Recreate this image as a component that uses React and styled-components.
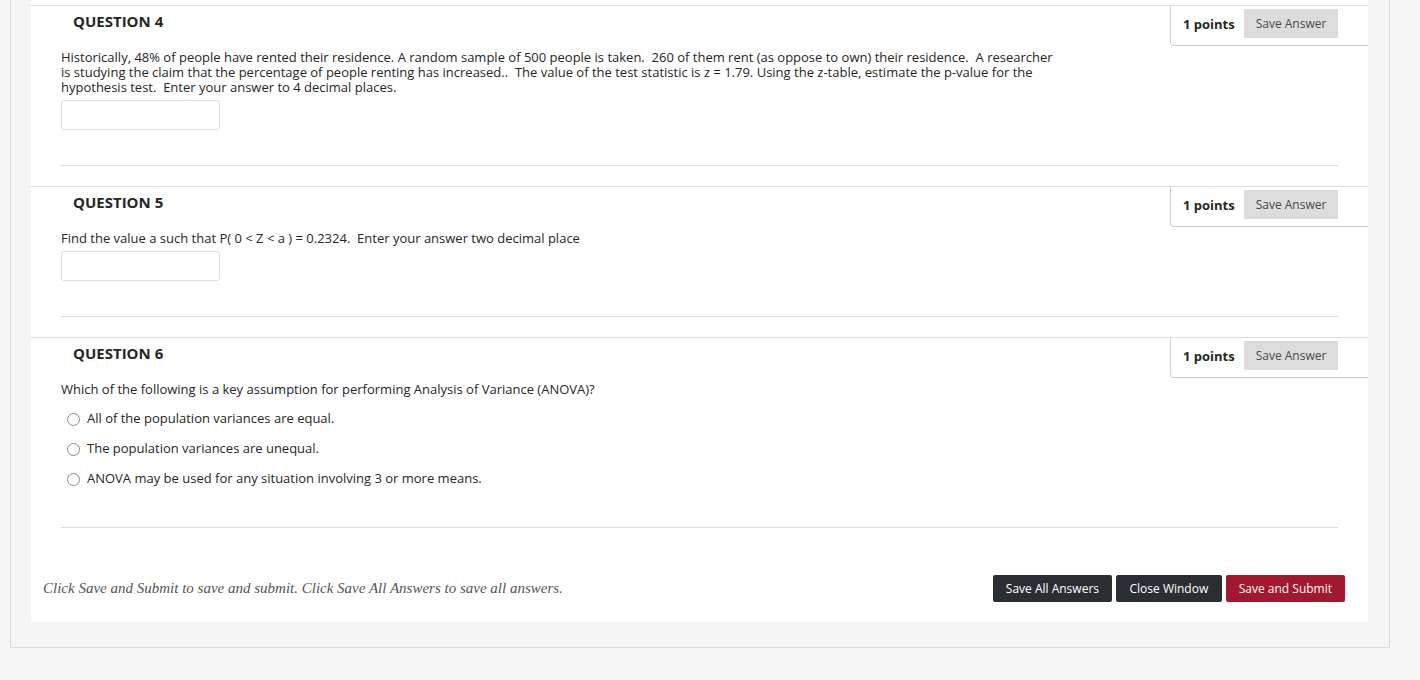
import React from "react";
import styled, { createGlobalStyle } from "styled-components";

const GlobalStyle = createGlobalStyle`
  html, body {
    margin: 0;
    padding: 0;
    background: #f6f6f6;
  }
  body {
    font-family: "Open Sans", "Liberation Sans", sans-serif;
    color: #262626;
  }
`;

const Page = styled.div`
  padding: 0 0 32px 10px;
`;

const Panel = styled.div`
  box-sizing: border-box;
  width: 1380px;
  border: 1px solid #d9d9d9;
  border-top: none;
  background: #f5f5f5;
  padding: 0 21px 25px 20px;
`;

const Content = styled.div`
  background: #fff;
  padding: 5px 0 20px;
`;

const Block = styled.div`
  border-top: 1px solid #dcdcdc;
`;

const Header = styled.div`
  display: flex;
  justify-content: space-between;
  align-items: flex-start;
`;

const Title = styled.h3`
  margin: 7px 0 0 42px;
  font-size: 15px;
  font-weight: 700;
  line-height: 16px;
  color: #262626;
`;

const PointsBox = styled.div`
  box-sizing: border-box;
  width: 198px;
  height: 40px;
  display: flex;
  align-items: center;
  justify-content: space-between;
  padding: 3px 30px 7px 12px;
  border-left: 1px solid #cfcfcf;
  border-bottom: 1px solid #cfcfcf;
  border-bottom-left-radius: 4px;
`;

const Points = styled.span`
  font-size: 13px;
  font-weight: 700;
  color: #262626;
`;

const SaveButton = styled.button`
  width: 94px;
  height: 29px;
  border: none;
  border-radius: 1px;
  background: #dcdcdc;
  color: #4a4a4a;
  font-family: "Open Sans", "Liberation Sans", sans-serif;
  font-size: 12px;
  padding: 0;
`;

const Body = styled.div`
  padding: 4px 30px 0;
`;

const QText = styled.p`
  margin: 0;
  max-width: 1000px;
  font-size: 13px;
  line-height: 15px;
  color: #262626;
`;

const AnswerInput = styled.input`
  display: block;
  box-sizing: border-box;
  width: 159px;
  height: 30px;
  margin-top: 5px;
  border: 1px solid #dddddd;
  border-radius: 3px;
  background: #fff;
`;

const Options = styled.div`
  margin-top: 6px;
`;

const Option = styled.label`
  display: flex;
  align-items: center;
  height: 30px;
  font-size: 13px;
  color: #262626;
`;

const Radio = styled.input`
  appearance: none;
  box-sizing: border-box;
  width: 13px;
  height: 13px;
  margin: 2px 7px 0 6px;
  border: 1px solid #8a8a8a;
  border-radius: 50%;
  background: #fff;
`;

const Separator = styled.hr`
  margin: ${(p) => p.$gap}px 0 20px;
  border: none;
  border-top: 1px solid #dcdcdc;
`;

const Footer = styled.div`
  display: flex;
  justify-content: space-between;
  align-items: center;
  padding: 27px 23px 0 12px;
`;

const Hint = styled.p`
  margin: 0;
  font-family: "Liberation Serif", "Times New Roman", serif;
  font-style: italic;
  font-size: 15px;
  color: #555;
`;

const Actions = styled.div`
  display: flex;
  gap: 4px;
`;

const ActionButton = styled.button`
  height: 27px;
  padding: 0 ${(p) => p.$pad}px;
  border: none;
  border-radius: 2px;
  background: ${(p) => (p.$primary ? "#a3172f" : "#2a2e33")};
  color: #fff;
  font-family: "Open Sans", "Liberation Sans", sans-serif;
  font-size: 12px;
`;

function Question({ number, children }) {
  return (
    <Block>
      <Header>
        <Title>QUESTION {number}</Title>
        <PointsBox>
          <Points>1 points</Points>
          <SaveButton>Save Answer</SaveButton>
        </PointsBox>
      </Header>
      <Body>{children}</Body>
    </Block>
  );
}

const options = [
  "All of the population variances are equal.",
  "The population variances are unequal.",
  "ANOVA may be used for any situation involving 3 or more means.",
];

export default function App() {
  return (
    <>
      <GlobalStyle />
      <Page>
        <Panel>
          <Content>
            <Question number={4}>
              <QText>
                Historically, 48% of people have rented their residence. A random sample of 500 people is
                taken.&nbsp; 260 of them rent (as oppose to own) their residence.&nbsp; A researcher is
                studying the claim that the percentage of people renting has increased..&nbsp; The value of
                the test statistic is z = 1.79. Using the z-table, estimate the p-value for the hypothesis
                test.&nbsp; Enter your answer to 4 decimal places.
              </QText>
              <AnswerInput type="text" />
              <Separator $gap={35} />
            </Question>
            <Question number={5}>
              <QText>
                Find the value a such that P( 0 &lt; Z &lt; a ) = 0.2324.&nbsp; Enter your answer two
                decimal place
              </QText>
              <AnswerInput type="text" />
              <Separator $gap={35} />
            </Question>
            <Question number={6}>
              <QText>Which of the following is a key assumption for performing Analysis of Variance (ANOVA)?</QText>
              <Options>
                {options.map((o) => (
                  <Option key={o}>
                    <Radio type="radio" name="q6" />
                    {o}
                  </Option>
                ))}
              </Options>
              <Separator $gap={34} />
            </Question>
            <Footer>
              <Hint>Click Save and Submit to save and submit. Click Save All Answers to save all answers.</Hint>
              <Actions>
                <ActionButton $pad={13}>Save All Answers</ActionButton>
                <ActionButton $pad={13.5}>Close Window</ActionButton>
                <ActionButton $pad={13} $primary>Save and Submit</ActionButton>
              </Actions>
            </Footer>
          </Content>
        </Panel>
      </Page>
    </>
  );
}
